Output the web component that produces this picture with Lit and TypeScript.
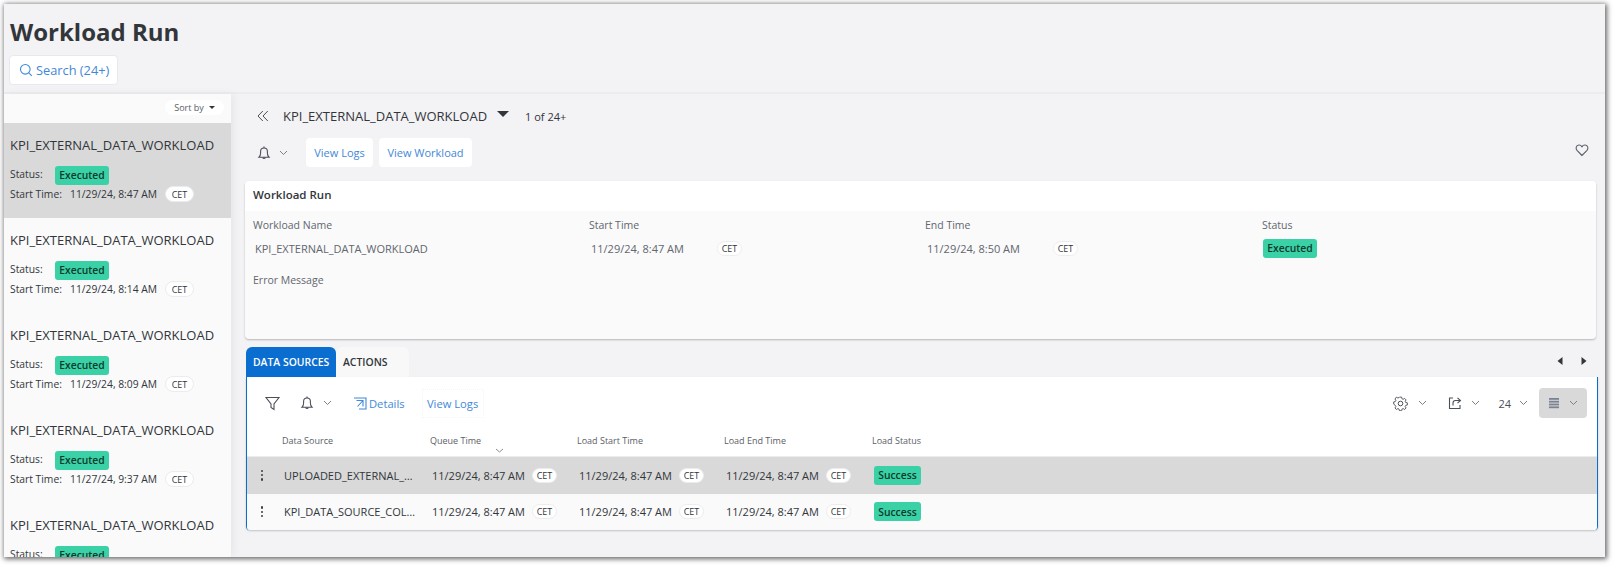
import { LitElement, html, css } from "lit";
import { customElement } from "lit/decorators.js";

const chev = html`<svg class="chev" width="9" height="6" viewBox="0 0 9 6"><path d="M1 1l3.5 3.5L8 1" fill="none" stroke="#7b7f88" stroke-width="1"/></svg>`;
const bell = html`<svg width="16" height="16" viewBox="0 0 16 16" fill="none" stroke="#4a4f58" stroke-width="1.1"><path d="M3 12.2c1-1 1.6-2 1.6-4.2V6.4a3.4 3.4 0 0 1 6.8 0V8c0 2.2.6 3.2 1.6 4.2z"/><path d="M6.7 12.5a1.4 1.4 0 0 0 2.6 0M8 1.6V3"/></svg>`;
const cet = html`<span class="cet">CET</span>`;
const badge = (t: string, c = "") => html`<span class="badge ${c}">${t}</span>`;
const items = ["11/29/24, 8:47 AM", "11/29/24, 8:14 AM", "11/29/24, 8:09 AM", "11/27/24, 9:37 AM", "11/27/24, 9:30 AM"];
const rows = ["UPLOADED_EXTERNAL_DATA_SOURCE", "KPI_DATA_SOURCE_COLLECTION"];

@customElement("app-root")
export class AppRoot extends LitElement {
  static styles = css`
    :host { display: block; background: #fff; padding: 4px 0 0 4px; height: 563px; width: 1611px; overflow: hidden; font-family: "Open Sans", sans-serif; color: #32363a; }
    * { box-sizing: border-box; }
    .win { width: 1601px; height: 553px; background: #f3f2f5; box-shadow: 1px 1px 5px 1px rgba(0,0,0,.6); display: flex; flex-direction: column; overflow: hidden; }
    .head { height: 90px; padding: 13px 0 0 6px; border-bottom: 2px solid #ecebee; flex: none; }
    h1 { margin: 0; font-size: 24px; line-height: 30px; font-weight: 700; color: #32363a; }
    .search { margin: 8px 0 0 -1px; display: inline-flex; align-items: center; gap: 3px; width: 109px; height: 30px; padding-left: 9px; background: #fff; border-radius: 4px; border: 1px solid #e9e9ec; color: #3f88d8; font-size: 12.8px; }
    .body { flex: 1; display: flex; min-height: 0; }
    .side { width: 227px; flex: none; background: #fafafa; overflow: hidden; box-shadow: 3px 0 8px rgba(0,0,0,.05); position: relative; }
    .sortrow { height: 29px; display: flex; justify-content: flex-end; align-items: center; padding: 0 7px 3px 0; }
    .sort { width: 59px; height: 15px; border-radius: 8px; background: #fff; font-size: 9px; color: #5a5e66; display: flex; align-items: center; justify-content: center; gap: 5px; }
    .caret { width: 0; height: 0; border-left: 3px solid transparent; border-right: 3px solid transparent; border-top: 3px solid #32363a; }
    .item { height: 95px; padding: 13px 0 0 6px; flex: none; }
    .item.on { background: #d9d9d9; }
    .name { font-size: 13px; line-height: 19px; height: 19px; white-space: nowrap; }
    .kv { display: flex; align-items: center; font-size: 10.3px; color: #32363a; }
    .kv.st { margin-top: 10px; height: 20px; }
    .kv.st .l { transform: translateY(-1px); }
    .kv.tm { height: 18px; }
    .kv .l { width: 45px; flex: none; }
    .kv.tm .l { width: 60px; }
    .kv.tm .cet { margin-left: 8px; width: 29px; height: 16px; }
    .badge { display: inline-flex; align-items: center; justify-content: center; width: 54px; height: 19px; border-radius: 3px; background: #3bd1a6; color: #0c3a2c; font-size: 10.3px; font-weight: 600; }
    .badge.s { width: 47px; }
    .cet { display: inline-flex; align-items: center; justify-content: center; width: 25px; height: 15px; border-radius: 8px; background: #fff; border: 1px solid #ececec; font-size: 9px; color: #32363a; flex: none; }
    .main { flex: 1; min-width: 0; padding: 0 8px 0 15px; display: flex; flex-direction: column; }
    .titlebar { height: 44px; display: flex; align-items: center; padding: 0 0 0 11px; flex: none; }
    .titlebar .t { margin-left: 14px; font-size: 13px; color: #32363a; }
    .bigcaret { margin-left: 10px; width: 0; height: 0; border-left: 6px solid transparent; border-right: 6px solid transparent; border-top: 6px solid #32363a; transform: translateY(-2px); }
    .count { margin-left: 16px; font-size: 11px; }
    .actions { height: 29px; display: flex; align-items: center; padding-left: 10px; flex: none; }
    .actions .chev { margin: 0 0 0 7px; }
    .btn { height: 29px; background: #fff; border-radius: 4px; color: #3f88d8; font-size: 11px; display: inline-flex; align-items: center; justify-content: center; }
    .b1 { width: 67px; margin-left: 18px; } .b2 { width: 93px; margin-left: 6px; }
    .heart { margin: 0 8px 6px auto; }
    .card { margin: 14px 0 0 -1px; height: 158px; width: 1351px; flex: none; background: #fafafa; border-radius: 4px; box-shadow: 0 1px 2px rgba(0,0,0,.25); overflow: hidden; }
    .card .ch { height: 30px; background: #fff; padding: 0 0 3px 8px; display: flex; align-items: center; font-size: 11.5px; font-weight: 600; }
    .grid { display: grid; grid-template-columns: 336px 336px 337px 1fr; padding: 6px 0 0 8px; }
    .lab { font-size: 10.5px; color: #62666e; line-height: 16px; }
    .val { height: 30px; display: flex; align-items: center; padding-left: 2px; font-size: 11px; color: #62666e; }
    .d { width: 126px; flex: none; }
    .val.b { padding-left: 1px; }
    .err { font-size: 10.5px; color: #62666e; padding: 9px 0 0 8px; line-height: 16px; }
    .tabs { margin-top: 8px; height: 30px; flex: none; display: flex; align-items: stretch; width: 1353px; }
    .tab { display: flex; align-items: center; font-size: 10.4px; font-weight: 600; border-radius: 6px 6px 0 0; padding-left: 7px; }
    .tab.a { width: 90px; background: #0a6ed1; color: #fff; }
    .tab.b { width: 73px; background: #f8f8f8; color: #32363a; }
    .arrows { margin-left: auto; display: flex; align-items: center; gap: 18px; padding-right: 12px; margin-top: -2px; }
    .panel { height: 153px; width: 1352px; flex: none; background: #fff; border-left: 1.5px solid #0a6ed1; border-right: 1.5px solid #0a6ed1; border-radius: 0 0 4px 4px; box-shadow: 0 1px 2px rgba(0,0,0,.2); overflow: hidden; }
    .tools { height: 42px; display: flex; align-items: center; padding: 10px 0 0 17px; }
    .link { color: #3f88d8; font-size: 11.2px; display: inline-flex; align-items: center; }
    .sp18 { width: 18px; } .sp8 { width: 8px; } .sp10 { width: 10px; } .sp21 { width: 21px; } .sp9 { width: 9px; }
    .tools .det { margin-left: 21px; gap: 2px; }
    .tools .vl { margin-left: 17px; width: 62px; height: 29px; justify-content: center; outline: 1px dotted #f5f5f5; outline-offset: -1px; }
    .tools .right { margin-left: auto; display: flex; align-items: center; padding-right: 10px; }
    .gray { width: 48px; height: 30px; background: #d9d9d9; border-radius: 4px; display: flex; align-items: center; justify-content: center; gap: 9px; margin-left: 11px; }
    .num { font-size: 11px; margin: 0 8px 0 18px; color: #4a4f58; }
    .thead, .row { display: grid; grid-template-columns: 35px 148px 147px 147px 148px 1fr; align-items: center; }
    .thead { height: 38px; padding-top: 6px; font-size: 9px; color: #5a5e66; border-bottom: 1px solid #ececec; }
    .thead .q { position: relative; }
    .sortc { position: absolute; left: 65px; top: 14px; }
    .row { height: 36.5px; font-size: 11px; background: #fafafa; }
    .row.on { background: #d9d9d9; }
    .keb { display: flex; flex-direction: column; gap: 2px; align-items: center; width: 30px; }
    .keb i { width: 2.4px; height: 2.4px; background: #3a3e46; border-radius: 50%; display: block; }
    .nm { overflow: hidden; text-overflow: ellipsis; white-space: nowrap; padding: 0 14px 0 2px; }
    .dt { display: flex; align-items: center; padding-left: 2px; white-space: nowrap; }
    .dt .cet { margin-left: 7px; }
    .row .bd { padding-left: 2px; display: flex; }
  `;

  render() {
    return html`<div class="win">
      <div class="head">
        <h1>Workload Run</h1>
        <div class="search"><svg width="14" height="14" viewBox="0 0 14 14" fill="none" stroke="#3f88d8" stroke-width="1.1"><circle cx="6.3" cy="6.3" r="4.8"/><path d="M9.8 9.8l3 3"/></svg>Search (24+)</div>
      </div>
      <div class="body">
        <div class="side">
          <div class="sortrow"><div class="sort">Sort by <span class="caret"></span></div></div>
          ${items.map((d, i) => html`<div class="item ${i === 0 ? "on" : ""}">
            <div class="name">KPI_EXTERNAL_DATA_WORKLOAD</div>
            <div class="kv st"><span class="l">Status:</span>${badge("Executed")}</div>
            <div class="kv tm"><span class="l">Start Time:</span><span>${d}</span>${cet}</div>
          </div>`)}
        </div>
        <div class="main">
          <div class="titlebar">
            <svg width="12" height="12" viewBox="0 0 12 12" fill="none" stroke="#4a4f58" stroke-width="1"><path d="M5.8 1L1 6l4.800 5M10.800 1L6 6l4.800 5"/></svg>
            <span class="t">KPI_EXTERNAL_DATA_WORKLOAD</span><span class="bigcaret"></span><span class="count">1 of 24+</span>
          </div>
          <div class="actions">
            ${bell}${chev}
            <span class="btn b1">View Logs</span><span class="btn b2">View Workload</span>
            <svg class="heart" width="14" height="14" viewBox="0 0 14 14" fill="none" stroke="#5a5e66" stroke-width="1.1"><path d="M7 12.500L2 7.300C.4 5.500 1 2.200 3.800 2 5.200 1.900 6.400 2.700 7 3.700 7.600 2.700 8.800 1.900 10.200 2 13 2.200 13.600 5.500 12 7.300z"/></svg>
          </div>
          <div class="card">
            <div class="ch">Workload Run</div>
            <div class="grid">
              <div class="lab">Workload Name</div><div class="lab">Start Time</div><div class="lab">End Time</div><div class="lab">Status</div>
              <div class="val">KPI_EXTERNAL_DATA_WORKLOAD</div>
              <div class="val"><span class="d">11/29/24, 8:47 AM</span>${cet}</div>
              <div class="val"><span class="d">11/29/24, 8:50 AM</span>${cet}</div>
              <div class="val b">${badge("Executed")}</div>
            </div>
            <div class="err">Error Message</div>
          </div>
          <div class="tabs">
            <div class="tab a">DATA SOURCES</div><div class="tab b">ACTIONS</div>
            <div class="arrows">
              <svg width="6" height="8" viewBox="0 0 6 8"><path d="M5.500 0v8L.5 4z" fill="#32363a"/></svg>
              <svg width="6" height="8" viewBox="0 0 6 8"><path d="M.5 0v8l5-4z" fill="#32363a"/></svg>
            </div>
          </div>
          <div class="panel">
            <div class="tools">
              <svg width="17" height="17" viewBox="0 0 17 17" fill="none" stroke="#4a4f58" stroke-width="1.100"><path d="M2 2.500h13L10 9v5.500l-3-2V9z"/></svg>
              <span class="sp18"></span>${bell}<span class="sp8"></span>${chev}
              <span class="link det"><svg width="14" height="14" viewBox="0 0 14 14" fill="none" stroke="#3f88d8" stroke-width="1.100"><path d="M1 2h12v11H6M3.500 4.500h6.500v6M10 4.500L4.500 10.500"/></svg>Details</span>
              <span class="link vl">View Logs</span>
              <div class="right">
                <svg width="15" height="15" viewBox="0 0 15 15" fill="none" stroke="#4a4f58" stroke-width="1"><circle cx="7.500" cy="7.500" r="2.300"/><path d="M6.300 1h2.400l.4 1.800 1.300.6 1.600-1 1.600 1.700-1 1.500.6 1.300 1.800.4v2.400l-1.800.4-.6 1.300 1 1.500-1.600 1.700-1.600-1-1.300.6-.4 1.800H6.300l-.4-1.800-1.300-.6-1.600 1-1.600-1.700 1-1.500-.6-1.300L0 8.700V6.300l1.800-.4.600-1.300-1-1.500L3 1l1.600 1 1.300-.6z" transform="translate(.7 .2) scale(.91)"/></svg>
                <span class="sp10"></span>${chev}
                <span class="sp21"></span>
                <svg width="14" height="14" viewBox="0 0 14 14" fill="none" stroke="#4a4f58" stroke-width="1.100"><path d="M5 2H1.500v10.500h10.500V9M5 9.500V7c0-1.500 1-2.500 2.500-2.500H12M9.500 1.800L12.500 4.500 9.500 7.200"/></svg>
                <span class="sp9"></span>${chev}
                <span class="num">24</span>${chev}
                <div class="gray">
                  <svg width="11" height="11" viewBox="0 0 11 11" fill="#7b8294"><rect y="0" width="10" height="1.800"/><rect y="2.800" width="10" height="1.800"/><rect y="5.600" width="10" height="1.800"/><rect y="8.400" width="10" height="1.800"/></svg>
                  ${chev}
                </div>
              </div>
            </div>
            <div class="thead">
              <span></span><span>Data Source</span>
              <span class="q">Queue Time<svg class="sortc" width="9" height="6" viewBox="0 0 9 6"><path d="M1 1l3.500 3 3.500-3" fill="none" stroke="#8a8e96"/></svg></span>
              <span>Load Start Time</span><span>Load End Time</span><span>Load Status</span>
            </div>
            ${rows.map((n, i) => html`<div class="row ${i === 0 ? "on" : ""}">
              <div class="keb"><i></i><i></i><i></i></div>
              <div class="nm">${n}</div>
              ${[0, 1, 2].map(() => html`<div class="dt">11/29/24, 8:47 AM${cet}</div>`)}
              <div class="bd">${badge("Success", "s")}</div>
            </div>`)}
          </div>
        </div>
      </div>
    </div>`;
  }
}
